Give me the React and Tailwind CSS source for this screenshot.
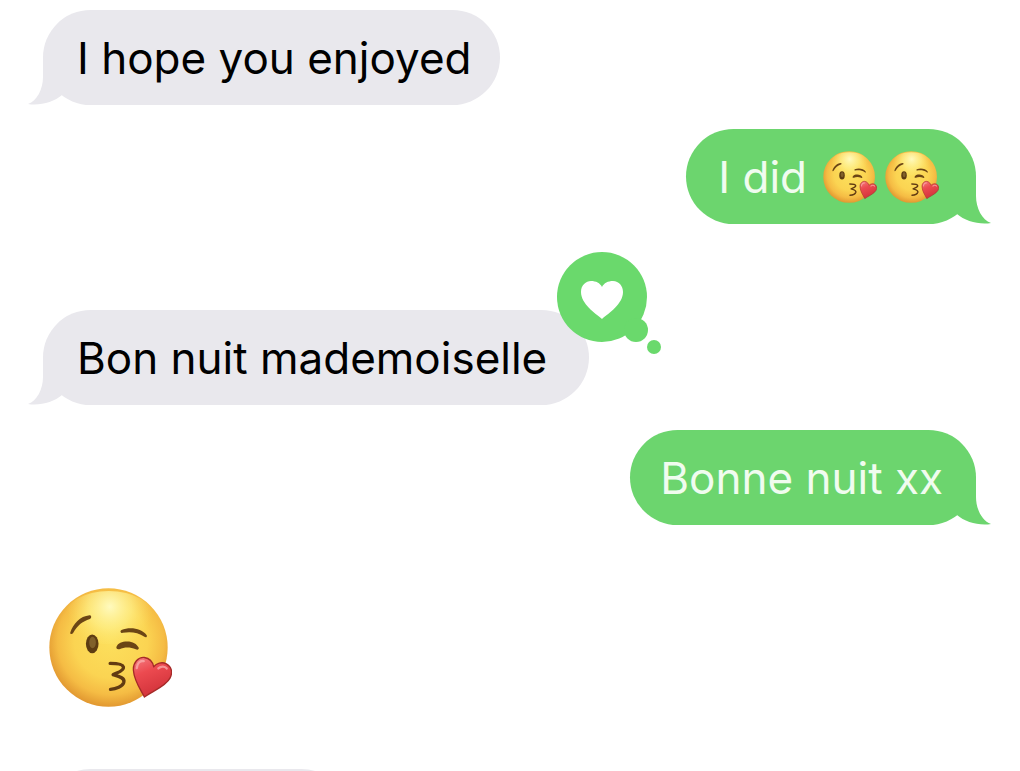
import { useId } from "react";

const MESSAGES = [
  { id: 1, from: "them", text: "I hope you enjoyed", space: "" },
  { id: 2, from: "me", text: "I did", kisses: 2, space: "mt-6" },
  { id: 3, from: "them", text: "Bon nuit mademoiselle", loved: true, space: "mt-[86px]" },
  { id: 4, from: "me", text: "Bonne nuit xx", space: "mt-[25px]" },
];

function KissEmoji({ className }) {
  const id = useId();
  const face = `${id}-face`;
  const shine = `${id}-shine`;
  const heart = `${id}-heart`;

  return (
    <svg viewBox="42 39 370 358" className={className} role="img" aria-label="Face blowing a kiss">
      <defs>
        <radialGradient id={face} gradientUnits="userSpaceOnUse" cx="228" cy="200" r="200">
          <stop offset="0" stopColor="#fcdf5c" />
          <stop offset="0.55" stopColor="#fbd452" />
          <stop offset="0.8" stopColor="#f5bc44" />
          <stop offset="1" stopColor="#e0952f" />
        </radialGradient>
        <radialGradient id={shine} gradientUnits="userSpaceOnUse" cx="225" cy="95" r="130">
          <stop offset="0" stopColor="#fffcc4" stopOpacity="0.95" />
          <stop offset="0.5" stopColor="#fff594" stopOpacity="0.6" />
          <stop offset="1" stopColor="#ffe669" stopOpacity="0" />
        </radialGradient>
        <linearGradient id={heart} x1="0.2" y1="0" x2="0.6" y2="1">
          <stop offset="0" stopColor="#f4767a" />
          <stop offset="0.35" stopColor="#ec4a50" />
          <stop offset="1" stopColor="#cf3038" />
        </linearGradient>
      </defs>
      <circle cx="221" cy="218" r="178" fill={`url(#${face})`} />
      <ellipse cx="222" cy="128" rx="135" ry="80" fill={`url(#${shine})`} />
      {/* brows */}
      <path d="M106 173C115 146 135 124 164 121C170 121 171 129 165 132C142 139 127 152 115 174C112 179 105 179 106 173Z" fill="#6b4515" />
      <path d="M260 165C286 155 321 160 336 181C338 186 334 189 329 186C310 173 288 170 264 174C257 175 255 168 260 165Z" fill="#6b4515" />
      {/* eyes */}
      <ellipse cx="172" cy="207" rx="19" ry="28" fill="#5d3c12" />
      <ellipse cx="173" cy="203" rx="10" ry="17" fill="#80602a" />
      <path d="M245 216C250 204 261 200 277 200C294 200 306 207 312 219C313 224 308 226 303 223C286 216 269 216 254 223C248 225 243 222 245 216Z" fill="#6b4515" />
      {/* lips */}
      <path d="M226 266C243 266 264 268 266 277C268 289 244 294 235 300C252 305 271 309 267 323C263 335 244 343 227 344" fill="none" stroke="#623b12" strokeWidth="10" strokeLinecap="round" strokeLinejoin="round" />
      <path
        d="M329 367C318 345 298 318 296 287C294 263 311 246 329 248C344 250 354 262 357 276C365 266 381 260 395 267C411 275 415 293 406 310C393 335 353 349 329 367Z"
        fill={`url(#${heart})`}
        stroke="#a52a28"
        strokeWidth="4"
        strokeLinejoin="round"
      />
      <path d="M306 280C307 265 316 257 327 259M371 281C379 273 391 274 396 281" fill="none" stroke="#fbb5b3" strokeWidth="7" strokeLinecap="round" opacity="0.7" />
    </svg>
  );
}

function Tail({ side }) {
  return (
    <svg
      viewBox="0 0 34 48"
      className={`absolute bottom-0 h-12 w-[34px] ${side === "me" ? "-right-[15px] -scale-x-100" : "-left-[15px]"}`}
      fill="currentColor"
      aria-hidden="true"
    >
      <path d="M15 0V20C15 32 9 44 0 47C12 49 26 45 34 38V0Z" />
    </svg>
  );
}

function LoveReaction() {
  return (
    <svg
      viewBox="0 0 105 104"
      className="absolute -top-[58px] -right-[73px] h-[104px] w-[105px]"
      role="img"
      aria-label="Loved"
    >
      <g fill="#6ad96c">
        <circle cx="45" cy="45" r="45" />
        <circle cx="79" cy="78" r="12" />
        <circle cx="97" cy="95" r="7" />
      </g>
      <path
        d="M45 67C38 61 24 52 24 40C24 33 29 29 34 29C39 29 43 31 45 35C47 31 51 29 56 29C62 29 66 34 66 40C66 52 52 61 45 67Z"
        fill="#fff"
      />
    </svg>
  );
}

function bubblePadding({ from, loved, kisses }) {
  if (loved) return "pl-[34px] pr-[42px]";
  if (kisses) return "pl-8 pr-[37px]";
  return from === "me" ? "pl-[30px] pr-[33px]" : "pl-[34px] pr-[28px]";
}

function Bubble({ message }) {
  const mine = message.from === "me";

  return (
    <li className={`flex ${mine ? "justify-end" : "justify-start"} ${message.space}`}>
      <div
        className={`relative flex min-h-[95px] items-center rounded-[48px] ${bubblePadding(message)} ${
          mine ? "bg-[#6cd56e] text-[#6cd56e]" : "bg-[#e9e8ed] text-[#e9e8ed]"
        }`}
      >
        <Tail side={message.from} />
        <p className={`relative flex items-center whitespace-nowrap ${mine ? "text-[#f0fcef]" : "text-black"}`}>
          {message.text}
          {message.kisses && (
            <span className="ml-4 flex gap-2">
              {Array.from({ length: message.kisses }, (_, i) => (
                <KissEmoji key={i} className="h-[52px] w-[54px]" />
              ))}
            </span>
          )}
        </p>
        {message.loved && <LoveReaction />}
      </div>
    </li>
  );
}

export default function App() {
  return (
    <main className="h-screen overflow-hidden bg-white pt-[10px] pr-11 pl-[43px] font-['Inter',sans-serif] text-[44px] leading-[54px]">
      <ul>
        {MESSAGES.map((message) => (
          <Bubble key={message.id} message={message} />
        ))}
        <li className="mt-[63px] pl-[6px]">
          <KissEmoji className="h-[119px] w-[123px]" />
        </li>
        {/* next bubble, just scrolling into view */}
        <li className="mt-[62px] h-[95px] w-[306px] rounded-[48px] bg-[#e9e8ed]" />
      </ul>
    </main>
  );
}
